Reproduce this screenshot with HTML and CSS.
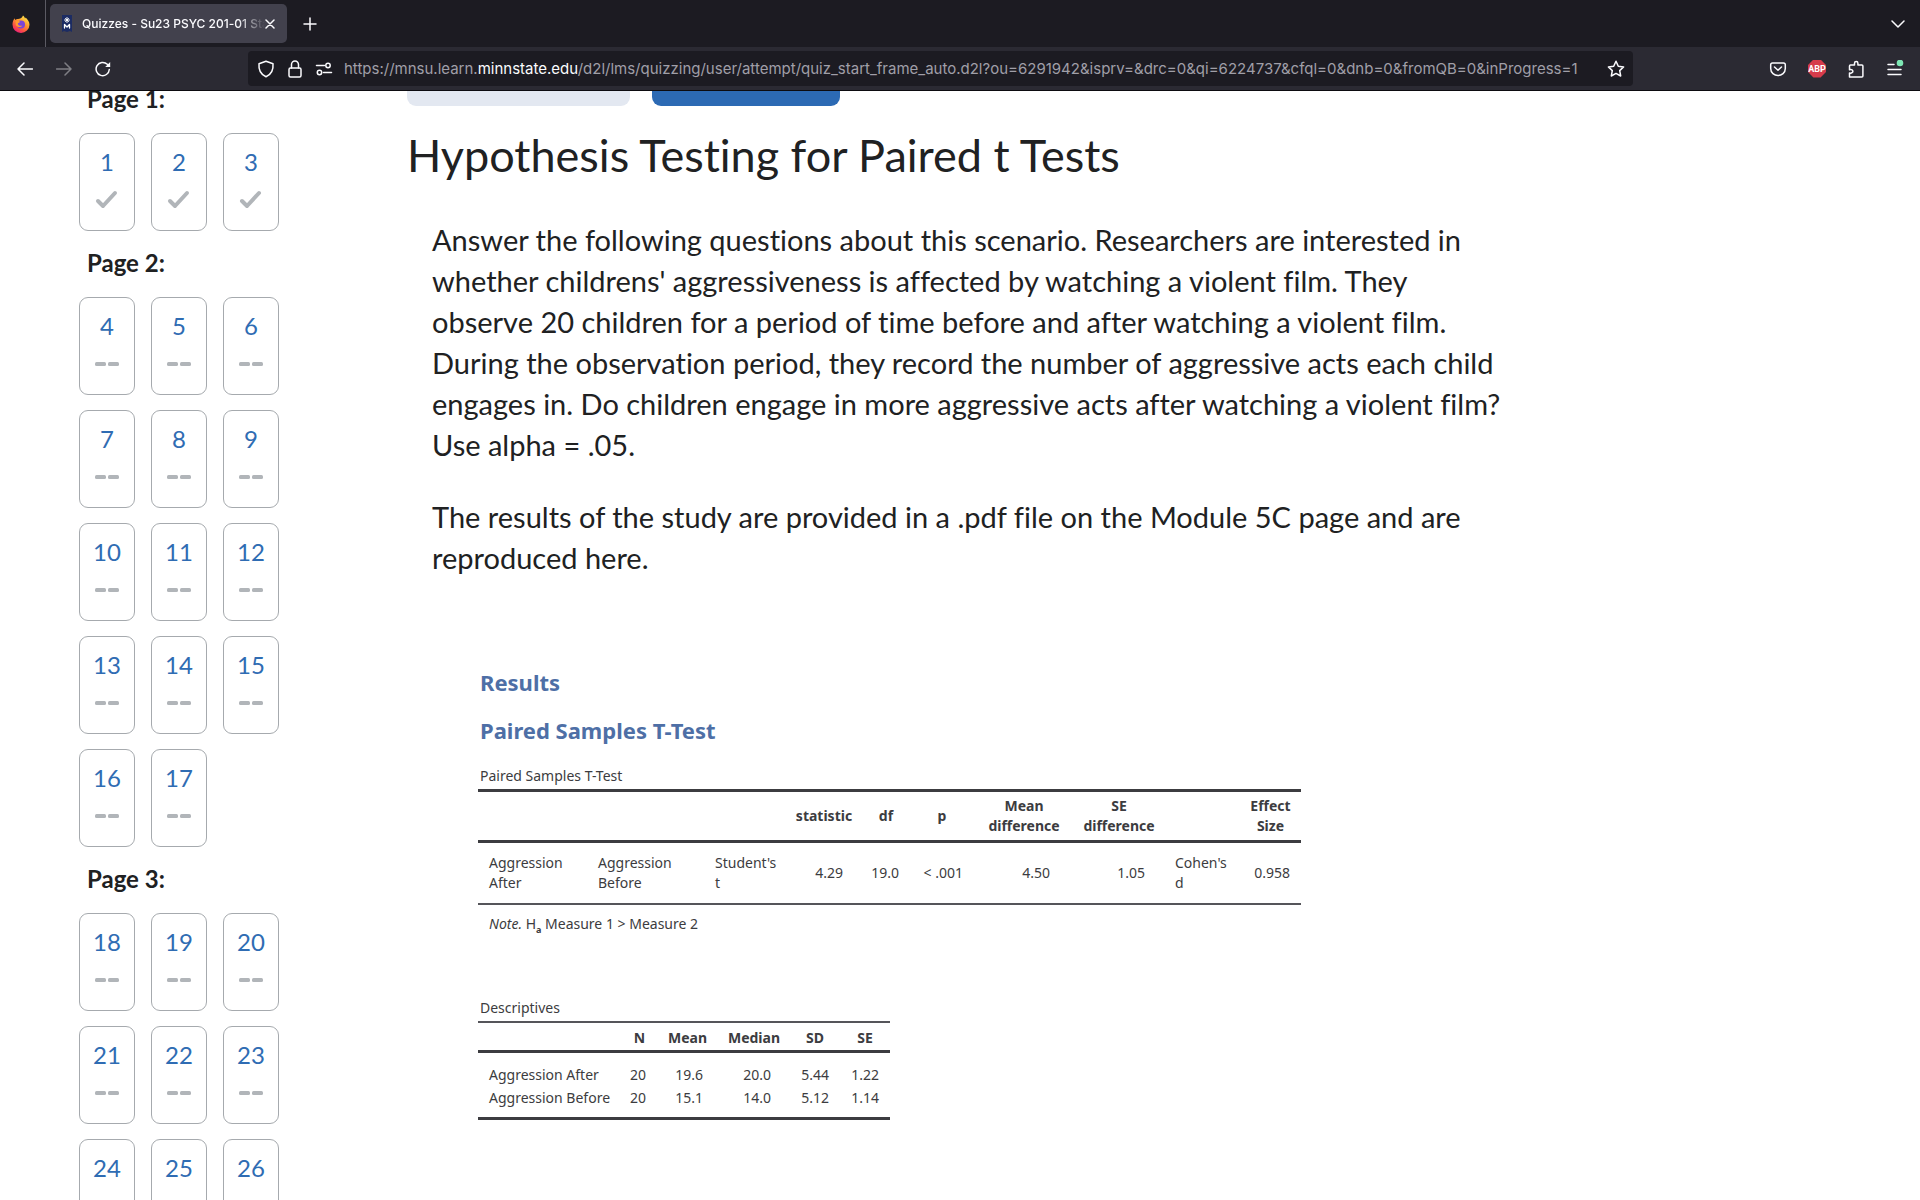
FILE: index.html
```html
<!DOCTYPE html>
<html lang="en">
<head>
  <meta charset="UTF-8">
  <title>Quizzes - Su23 PSYC 201-01 Statistics</title>
  <link rel="stylesheet" href="styles.css">
</head>
<body>
<header class="browser">
  <div class="tabbar">
    <div class="pinned">
      <svg width="18" height="18" viewBox="0 0 18 18">
        <defs>
          <linearGradient id="fox" x1="0.8" y1="0" x2="0.2" y2="1">
            <stop offset="0" stop-color="#fff14f"/>
            <stop offset="0.4" stop-color="#ff9a2e"/>
            <stop offset="0.75" stop-color="#fb4a48"/>
            <stop offset="1" stop-color="#e31587"/>
          </linearGradient>
        </defs>
        <path d="M11 0.5c1.2 1 1.8 2 2 3 .5-.2.6-.6.6-1 2 1.800 3.900 4.300 3.900 7.200A8.500 8.300 0 0 1 .5 9.500c0-2.400.8-4.500 2.300-6.200 0 .8.100 1.300.5 1.800C4 4.300 5 4 6 4c1.800-.2 4-.800 5-3.500z" fill="url(#fox)"/>
        <circle cx="9" cy="9.500" r="4" fill="#7b45d8"/>
        <path d="M3.500 6.500c1.500-1 3.500-.8 4.800.5-1 .3-1.500 1-2.500 1.200.2 2.300 2.500 3 4.500 2.300-1 2-5 2.300-6.500-.5z" fill="#ff9a2e"/>
      </svg>
    </div>
    <div class="tab">
      <svg class="favicon" width="10" height="17" viewBox="0 0 10 17">
        <path d="M0 0h10v17l-2-1-3 1-3-1-2 1z" fill="#1c2c63"/>
        <path d="M5 2.500v5M2.500 5h5M3.500 3.500l3 3M6.500 3.500l-3 3" stroke="#fff" stroke-width="1"/>
        <path d="M2.500 13V9.500L5 12l2.500-2.500V13" fill="none" stroke="#fff" stroke-width="1.300"/>
      </svg>
      <span class="tab-title">Quizzes - Su23 PSYC 201-01 Statistics</span>
      <button class="icon-btn" aria-label="Close tab"><svg width="10" height="10" viewBox="0 0 10 10"><path d="M1 1l8 8M9 1L1 9"/></svg></button>
    </div>
    <button class="icon-btn new-tab" aria-label="New tab"><svg width="14" height="14" viewBox="0 0 14 14"><path d="M7 1v12M1 7h12"/></svg></button>
    <button class="icon-btn all-tabs" aria-label="List all tabs"><svg width="14" height="8" viewBox="0 0 14 8"><path d="M1 1l6 6 6-6"/></svg></button>
  </div>
  <div class="toolbar">
    <button class="icon-btn nav-btn" aria-label="Back"><svg width="16" height="14" viewBox="0 0 16 14"><path d="M15.500 7H1M7 1L1 7l6 6"/></svg></button>
    <button class="icon-btn nav-btn disabled" aria-label="Forward" disabled><svg width="16" height="14" viewBox="0 0 16 14"><path d="M.5 7H15M9 1l6 6-6 6"/></svg></button>
    <button class="icon-btn nav-btn" aria-label="Reload"><svg width="16" height="16" viewBox="0 0 16 16"><path d="M14.300 8.500a6.600 6.600 0 1 1-2-5.200l2 2"/><path d="M15.200 1v5h-5z" fill="#fbfbfe" stroke="none"/></svg></button>
    <div class="urlbar">
      <svg width="18" height="18" viewBox="0 0 18 18"><path d="M9 1.200l7 2.600c.5 5.400-1.500 10.600-7 13-5.500-2.400-7.500-7.600-7-13z"/></svg>
      <svg width="18" height="18" viewBox="0 0 18 18"><rect x="3" y="8" width="12" height="9" rx="1.500"/><path d="M5.500 8V4.500a3.500 3.500 0 0 1 7 0V8"/></svg>
      <svg width="18" height="18" viewBox="0 0 18 18"><path d="M1.500 5.500h8M8.500 12.500h8"/><circle cx="13" cy="5.500" r="2.200"/><circle cx="4.500" cy="12.500" r="2.200"/></svg>
      <a class="url" href="#">https://mnsu.learn.<b>minnstate.edu</b>/d2l/lms/quizzing/user/attempt/quiz_start_frame_auto.d2l?ou=6291942&amp;isprv=&amp;drc=0&amp;qi=6224737&amp;cfql=0&amp;dnb=0&amp;fromQB=0&amp;inProgress=1</a>
      <button class="icon-btn" aria-label="Bookmark this page"><svg width="18" height="18" viewBox="0 0 18 18"><path d="M9 1.300l2.300 4.900 5.300.7-3.900 3.700 1 5.400L9 13.400 4.300 16l1-5.400L1.400 6.900l5.300-.7z"/></svg></button>
    </div>
    <div class="extensions">
      <button class="icon-btn" aria-label="Save to Pocket"><svg width="18" height="18" viewBox="0 0 18 18"><path d="M3.500 3h11c1 0 1.800.7 1.800 1.800v3.700c0 9.200-14.600 9.200-14.600 0V4.800C1.700 3.700 2.500 3 3.500 3z"/><path d="M5.500 7L9 10.200 12.500 7"/></svg></button>
      <button class="icon-btn" aria-label="Adblock Plus"><span class="abp">ABP</span></button>
      <button class="icon-btn" aria-label="Extensions"><svg width="18" height="18" viewBox="0 0 18 18"><path d="M2.500 17V13c4.500 1 4.500-4.500 0-3.300V6c0-.6.400-1 1-1h4V3.200a1.700 1.700 0 0 1 3.400 0V5h4c.6 0 1 .4 1 1v10c0 .6-.4 1-1 1z"/></svg></button>
      <button class="icon-btn" aria-label="Open application menu"><svg width="18" height="18" viewBox="0 0 18 18"><path d="M2 4.500h6M2 9.500h13M2 14.500h13"/><circle cx="14" cy="3" r="3.300" fill="#7ee8b5" stroke="none"/></svg></button>
    </div>
  </div>
</header>

<div class="page">
  <nav class="question-nav" id="questionNav"></nav>

  <main class="content">
    <div class="actions">
      <button class="btn btn-previous" aria-label="Previous Page"></button>
      <button class="btn btn-next" aria-label="Next Page"></button>
    </div>
    <h1>Hypothesis Testing for Paired t Tests</h1>
    <div class="scenario">
      <p>Answer the following questions about this scenario. Researchers are interested in whether childrens' aggressiveness is affected by watching a violent film. They observe 20 children for a period of time before and after watching a violent film. During the observation period, they record the number of aggressive acts each child engages in. Do children engage in more aggressive acts after watching a violent film? Use alpha = .05.</p>
      <p>The results of the study are provided in a .pdf file on the Module 5C page and are reproduced here.</p>
    </div>

    <section class="results">
      <h2>Results</h2>
      <h2>Paired Samples T-Test</h2>
      <table class="ttest">
        <caption>Paired Samples T-Test</caption>
        <colgroup>
          <col class="c-after"><col class="c-before"><col class="c-test"><col class="c-stat"><col class="c-df">
          <col class="c-p"><col class="c-meandiff"><col class="c-sediff"><col class="c-cohen"><col class="c-effect">
        </colgroup>
        <thead>
          <tr>
            <th></th><th></th><th></th>
            <th>statistic</th><th>df</th><th>p</th>
            <th>Mean<br>difference</th><th>SE<br>difference</th>
            <th></th><th>Effect<br>Size</th>
          </tr>
        </thead>
        <tbody>
          <tr>
            <td class="label">Aggression<br>After</td>
            <td class="label">Aggression<br>Before</td>
            <td class="label">Student's<br>t</td>
            <td class="wide">4.29</td>
            <td>19.0</td>
            <td>&lt; .001</td>
            <td class="wider">4.50</td>
            <td class="wide">1.05</td>
            <td class="label">Cohen's<br>d</td>
            <td>0.958</td>
          </tr>
        </tbody>
      </table>
      <p class="note"><i>Note.</i> H<sub>a</sub> Measure 1 &gt; Measure 2</p>

      <table class="descriptives">
        <caption>Descriptives</caption>
        <colgroup>
          <col class="c-name"><col class="c-n"><col class="c-mean"><col class="c-median"><col class="c-sd"><col class="c-se">
        </colgroup>
        <thead>
          <tr><th></th><th>N</th><th>Mean</th><th>Median</th><th>SD</th><th>SE</th></tr>
        </thead>
        <tbody>
          <tr><td class="label">Aggression After</td><td>20</td><td class="mid">19.6</td><td class="wide">20.0</td><td>5.44</td><td>1.22</td></tr>
          <tr><td class="label">Aggression Before</td><td>20</td><td class="mid">15.1</td><td class="wide">14.0</td><td>5.12</td><td>1.14</td></tr>
        </tbody>
      </table>
    </section>
  </main>
</div>
<script src="script.js"></script>
</body>
</html>
```
FILE: styles.css
```css
* { box-sizing: border-box; }
body { margin: 0; height: 100vh; display: flex; flex-direction: column; overflow: hidden; background: #fff; color: #202122; font-family: Lato, sans-serif; font-variant-ligatures: none; }
button { font: inherit; cursor: pointer; }

/* browser bars */
.browser { flex: none; border-bottom: 1px solid #0c0b10; background: #2b2a33; color: #fbfbfe; font-family: Inter, sans-serif; }
.browser svg { display: block; flex: none; fill: none; stroke: #fbfbfe; stroke-width: 1.5; stroke-linecap: round; stroke-linejoin: round; }
.pinned svg, .browser .favicon { stroke: none; }
.icon-btn { display: flex; align-items: center; justify-content: center; padding: 0; border: none; background: none; }
.tabbar { display: flex; align-items: center; height: 47px; background: #1c1b22; }
.pinned { display: flex; align-items: center; height: 47px; width: 46px; padding-left: 12px; border-right: 1px solid #5b5a63; }
.tab { display: flex; align-items: center; width: 237px; height: 39px; margin-left: 4px; padding: 0 12px; border-radius: 5px; background: #42414d; }
.tab-title { flex: 1; margin-left: 10px; overflow: hidden; white-space: nowrap; font-size: 12px; font-weight: 500; mask-image: linear-gradient(to right, #000 85%, transparent); }
.new-tab { margin-left: 16px; }
.all-tabs { margin-left: auto; margin-right: 15px; }
.toolbar { display: flex; align-items: center; height: 43px; padding: 0 16px; }
.nav-btn { width: 18px; margin-right: 21px; }
.disabled { opacity: 0.4; }
.urlbar { flex: 1; display: flex; align-items: center; gap: 11px; min-width: 0; height: 35px; margin: 0 136px 0 115px; padding: 0 8px 0 9px; border-radius: 4px; background: #1c1b22; }
.url { flex: 1; overflow: hidden; white-space: nowrap; color: #a09fa8; text-decoration: none; font-size: 15px; }
.url b { color: #fbfbfe; font-weight: 400; }
.extensions { display: flex; align-items: center; gap: 21px; }
.abp { width: 18px; height: 18px; background: #d63b4b; color: #fff; font-family: Roboto, sans-serif; font-size: 9px; font-weight: 700; line-height: 18px; text-align: center; clip-path: polygon(30% 0, 70% 0, 100% 30%, 100% 70%, 70% 100%, 30% 100%, 0 70%, 0 30%); }

/* scrolled quiz page */
.page { flex: 1; display: flex; min-height: 0; overflow: hidden; }
.question-nav { flex: none; width: 407px; margin-top: -10px; padding-left: 79px; }
.question-nav h2 { height: 36px; margin: 0 0 16px 8px; font-size: 24px; line-height: 36px; }
.tiles { display: grid; grid-template-columns: repeat(3, 56px); gap: 15px 16px; margin-bottom: 14px; }
.tile { display: flex; flex-direction: column; align-items: center; height: 98px; padding: 12px 0 0; border: 1px solid #a6aaae; border-radius: 9px; background: #fff; color: #2f6cb3; font-size: 24px; line-height: 32px; }
.tile svg { display: block; margin-top: 12px; }

.content { flex: 1; min-width: 0; }
.actions { display: flex; gap: 22px; margin-top: -37px; }
.btn { height: 52px; padding: 0; border: none; border-radius: 9px; }
.btn-previous { width: 223px; background: #e3e8f1; }
.btn-next { width: 188px; background: #2c6ab4; }
h1 { margin: 20px 0 0; font-size: 45px; font-weight: 400; line-height: 58px; }
.scenario { max-width: 1103px; padding: 35px 0 0 25px; }
.scenario p { margin: 0 0 31px; font-size: 29px; line-height: 41px; }

/* statistics output */
.results { margin: 88px 0 0 71px; color: #3c3c40; font-family: "Noto Sans", sans-serif; font-size: 14px; line-height: 20px; }
.results h2 { margin: 0 0 16px; padding-left: 2px; color: #4e6fa6; font-size: 22px; line-height: 32px; }
table { table-layout: fixed; border-collapse: collapse; }
caption { padding: 4px 0 3px 2px; text-align: left; }
th, td { padding: 0; }
td { padding-right: 11px; text-align: right; }
td.mid { padding-right: 15px; }
td.wide { padding-right: 19px; }
td.wider { padding-right: 24px; }
td.label { padding: 0 0 0 11px; text-align: left; }
thead { border-bottom: 3px solid #3c3c40; }
.ttest { width: 823px; border-top: 3px solid #3c3c40; border-bottom: 2px solid #55555a; }
.ttest th { height: 51px; }
.ttest td { height: 62px; }
.c-after { width: 109px; }
.c-before { width: 117px; }
.c-test { width: 82px; }
.c-stat, .c-cohen { width: 76px; }
.c-df { width: 48px; }
.c-p { width: 64px; }
.c-meandiff { width: 100px; }
.c-sediff { width: 90px; }
.c-effect { width: 61px; }
.note { margin: 9px 0 60px 11px; }
.note sub { font-size: 9px; font-weight: 700; line-height: 0; }
.descriptives { width: 412px; border-top: 2px solid #55555a; border-bottom: 3px solid #3c3c40; }
.descriptives th { height: 30px; padding-top: 4px; }
.descriptives tbody tr:first-child td { height: 35px; padding-top: 10px; }
.descriptives tbody tr:last-child td { height: 32px; padding-bottom: 8px; }
.c-name { width: 144px; }
.c-n { width: 35px; }
.c-mean { width: 61px; }
.c-median { width: 72px; }
.c-sd, .c-se { width: 50px; }
```
FILE: script.js
```js
const pages = [
  { first: 1, last: 3, answered: true },
  { first: 4, last: 17, answered: false },
  { first: 18, last: 29, answered: false }
];

const check = '<svg width="24" height="20" viewBox="0 0 24 20"><path d="M3 11l5 5L20 3" fill="none" stroke="#b1b5b9" stroke-width="4" stroke-linecap="round" stroke-linejoin="round"/></svg>';
const dashes = '<svg width="24" height="20" viewBox="0 0 24 20"><rect x="0" y="8" width="11" height="4" rx="1.500" fill="#b1b5b9"/><rect x="13" y="8" width="11" height="4" rx="1.500" fill="#b1b5b9"/></svg>';

let html = "";
pages.forEach((page, i) => {
  html += `<h2>Page ${i + 1}:</h2><div class="tiles">`;
  for (let n = page.first; n <= page.last; n++) {
    html += `<button class="tile">${n}${page.answered ? check : dashes}</button>`;
  }
  html += `</div>`;
});
document.getElementById('questionNav').innerHTML = html;
```
